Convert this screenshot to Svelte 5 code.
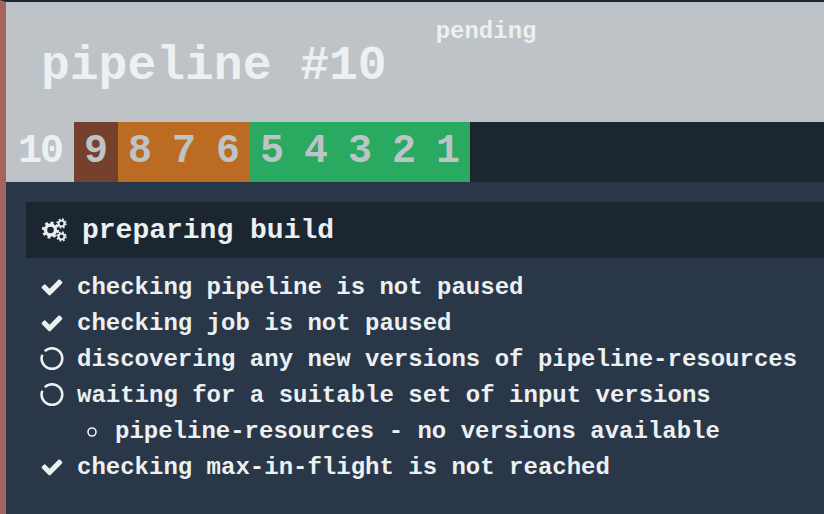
<script lang="ts">
	type Step = { state: 'done' | 'running' | 'sub'; text: string };

	const builds = [
		{ n: 10, cls: 'current' },
		{ n: 9, cls: 'aborted' },
		{ n: 8, cls: 'orange' },
		{ n: 7, cls: 'orange' },
		{ n: 6, cls: 'orange' },
		{ n: 5, cls: 'green' },
		{ n: 4, cls: 'green' },
		{ n: 3, cls: 'green' },
		{ n: 2, cls: 'green' },
		{ n: 1, cls: 'green' }
	];

	const steps: Step[] = [
		{ state: 'done', text: 'checking pipeline is not paused' },
		{ state: 'done', text: 'checking job is not paused' },
		{ state: 'running', text: 'discovering any new versions of pipeline-resources' },
		{ state: 'running', text: 'waiting for a suitable set of input versions' },
		{ state: 'sub', text: 'pipeline-resources - no versions available' },
		{ state: 'done', text: 'checking max-in-flight is not reached' }
	];

	const check =
		'M1671 566q0 40-28 68l-724 724-136 136q-28 28-68 28t-68-28l-136-136-362-362q-28-28-28-68t28-68l136-136q28-28 68-28t68 28l294 295 656-657q28-28 68-28t68 28l136 136q28 28 28 68z';
</script>

<div class="page">
	<header class="title">
		<h1>pipeline #10</h1>
		<span class="status">pending</span>
	</header>

	<nav class="builds">
		{#each builds as b}
			<div class="build {b.cls}">{b.n}</div>
		{/each}
	</nav>

	<section class="content">
		<div class="task">
			<svg class="cogs" viewBox="0 0 26 24" width="26" height="24">
				<g fill="none" stroke="#ecf0f1">
					<circle cx="9.5" cy="12" r="5" stroke-width="3.4" />
					<circle cx="9.5" cy="12" r="7.3" stroke-width="2.6" stroke-dasharray="2.87 2.86" />
					<circle cx="20.5" cy="5.5" r="2.9" stroke-width="1.9" />
					<circle cx="20.5" cy="5.5" r="4.4" stroke-width="1.6" stroke-dasharray="1.73 1.73" />
					<circle cx="20.5" cy="18.5" r="2.9" stroke-width="1.9" />
					<circle cx="20.5" cy="18.5" r="4.4" stroke-width="1.6" stroke-dasharray="1.73 1.73" />
				</g>
			</svg>
			<span>preparing build</span>
		</div>

		<ul class="steps">
			{#each steps as s}
				<li class:sub={s.state === 'sub'}>
					{#if s.state === 'done'}
						<svg class="icon" viewBox="0 0 1792 1792" width="24" height="24"><path d={check} fill="#ecf0f1" /></svg>
					{:else if s.state === 'running'}
						<svg class="icon" viewBox="0 0 24 24" width="24" height="24">
							<circle cx="12" cy="11.5" r="10.3" fill="none" stroke="#ecf0f1" stroke-width="2.5" stroke-dasharray="60 4.7" transform="rotate(-135 12 11.5)" />
						</svg>
					{:else}
						<svg class="bullet" viewBox="0 0 10 10" width="10" height="10">
							<circle cx="5" cy="5" r="4" fill="none" stroke="#ecf0f1" stroke-width="1.6" />
						</svg>
					{/if}
					<span>{s.text}</span>
				</li>
			{/each}
		</ul>
	</section>
</div>

<style>
	:global(body) {
		background: #2a3749;
	}

	.page {
		height: 514px;
		box-sizing: border-box;
		overflow: hidden;
		border-left: 6px solid #a5655e;
		border-top: 2px solid #1c2630;
		background: #2a3749;
		font-family: 'Liberation Mono', monospace;
		font-weight: bold;
		color: #ecf0f1;
	}

	.title {
		height: 120px;
		background: #bdc3c7;
		display: flex;
		align-items: flex-start;
		padding-left: 35px;
	}

	h1 {
		margin: 36px 0 0;
		font-size: 48px;
		line-height: 56px;
		font-weight: bold;
	}

	.status {
		margin: 17px 0 0 49px;
		font-size: 24px;
		line-height: 26px;
	}

	.builds {
		height: 60px;
		background: #1c2630;
		display: flex;
	}

	.build {
		width: 44px;
		text-align: center;
		font-size: 40px;
		line-height: 60px;
		color: #bdc3c7;
	}

	.current {
		width: 68px;
		background: #bdc3c7;
		color: #ecf0f1;
		letter-spacing: -2px;
	}

	.aborted {
		background: #75412c;
	}

	.orange {
		background: #bb6b22;
	}

	.green {
		background: #2aa961;
	}

	.content {
		padding: 20px 0 0 20px;
	}

	.task {
		height: 56px;
		background: #1c2630;
		display: flex;
		align-items: center;
		padding-left: 15px;
		font-size: 28px;
	}

	.task span {
		margin-left: 15px;
	}

	.steps {
		list-style: none;
		margin: 11px 0 0;
		padding: 0 0 0 14px;
		font-size: 24px;
	}

	.steps li {
		display: flex;
		align-items: center;
		height: 36px;
		white-space: nowrap;
	}

	.icon {
		flex: none;
		margin-right: 13px;
	}

	.steps li.sub {
		padding-left: 47px;
	}

	.bullet {
		flex: none;
		margin: 2px 18px 0 0;
	}

	.steps svg {
		display: block;
	}
</style>
